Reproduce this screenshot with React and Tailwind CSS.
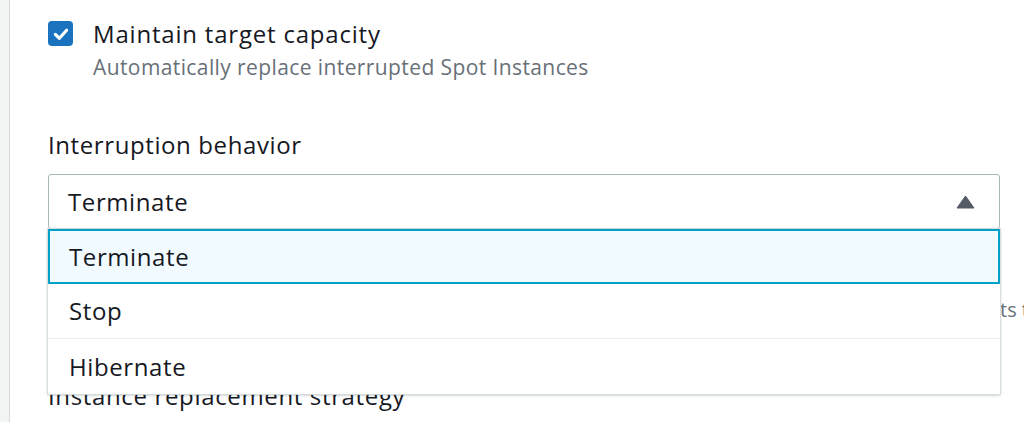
import React from "react";

export default function App() {
  const font = { fontFamily: '"Open Sans", "Noto Sans", Arial, sans-serif' };
  return (
    <div className="relative flex w-[1024px] h-[422px] overflow-hidden bg-white text-[#16191f]" style={font}>
      <div className="w-[10px] shrink-0 bg-[#f2f3f3] border-r border-[#d5dbdb]" />
      <div className="flex-1 pl-[38px] pt-[19px]">
        <div className="flex gap-[20px]">
          <div className="mt-[2px] w-[25px] h-[25px] shrink-0 rounded-[4px] bg-[#1b73bf] flex items-center justify-center">
            <svg width="18" height="18" viewBox="0 0 16 16" fill="none">
              <path d="M3 8.3 L6.6 11.8 L13 4.6" stroke="white" strokeWidth="2.8" strokeLinecap="round" strokeLinejoin="round" />
            </svg>
          </div>
          <div>
            <div className="text-[24px] leading-[30px] tracking-[0.8px]">Maintain target capacity</div>
            <div className="mt-[4px] text-[21px] leading-[28px] tracking-[0.4px] text-[#687078]">Automatically replace interrupted Spot Instances</div>
          </div>
        </div>

        <div className="mt-[49px] text-[24px] leading-[30px] tracking-[0.6px]">Interruption behavior</div>

        <div className="relative mt-[14px] w-[952px]">
          <div className="h-[55px] flex items-center justify-between border border-[#aab7b8] rounded-[3px] pl-[19px] pr-[24px]">
            <span className="text-[24px] leading-[30px] tracking-[0.6px]">Terminate</span>
            <svg width="19" height="14" viewBox="0 0 19 14">
              <path d="M9.5 1 L18 13 L1 13 Z" fill="#545b64" stroke="#545b64" strokeWidth="1" strokeLinejoin="round" />
            </svg>
          </div>

          <div className="absolute left-0 top-full z-10 w-full bg-white shadow-[0_0_0_1px_rgba(213,219,219,0.9),0_1px_3px_rgba(0,28,36,0.3)]">
            <div className="h-[55px] flex items-center border-2 border-[#00a1c9] bg-[#f1faff] px-[19px]">
              <span className="text-[24px] leading-[30px] tracking-[0.6px]">Terminate</span>
            </div>
            <div className="h-[54px] flex items-center px-[21px]">
              <span className="text-[24px] leading-[30px] tracking-[0.6px]">Stop</span>
            </div>
            <div className="h-[56px] flex items-center px-[21px] border-t border-[#eaeded]">
              <span className="text-[24px] leading-[30px] tracking-[0.6px]">Hibernate</span>
            </div>
          </div>
        </div>

        <div className="mt-[67px] flex text-[20px] leading-[28px] text-[#687078] whitespace-nowrap">
          <span className="w-[952px] shrink-0 overflow-hidden">Spot Fleet stops or hibernates interrupted instances</span>
          <span>ts t</span>
        </div>

        <div className="mt-[57px] text-[24px] leading-[30px] tracking-[0.65px]">Instance replacement strategy</div>
      </div>
    </div>
  );
}
